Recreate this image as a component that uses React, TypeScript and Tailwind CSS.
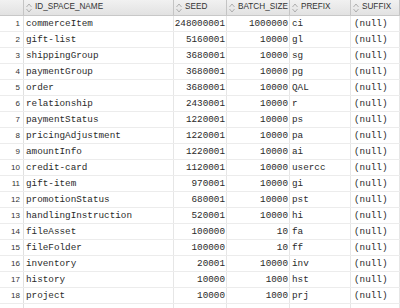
import React from "react";

const rows = [
  ["commerceItem", "248000001", "1000000", "ci"],
  ["gift-list", "5160001", "10000", "gl"],
  ["shippingGroup", "3680001", "10000", "sg"],
  ["paymentGroup", "3680001", "10000", "pg"],
  ["order", "3680001", "10000", "QAL"],
  ["relationship", "2430001", "10000", "r"],
  ["paymentStatus", "1220001", "10000", "ps"],
  ["pricingAdjustment", "1220001", "10000", "pa"],
  ["amountInfo", "1220001", "10000", "ai"],
  ["credit-card", "1120001", "10000", "usercc"],
  ["gift-item", "970001", "10000", "gi"],
  ["promotionStatus", "680001", "10000", "pst"],
  ["handlingInstruction", "520001", "10000", "hi"],
  ["fileAsset", "100000", "10", "fa"],
  ["fileFolder", "100000", "10", "ff"],
  ["inventory", "20001", "10000", "inv"],
  ["history", "10000", "1000", "hst"],
  ["project", "10000", "1000", "prj"],
];

const headers = ["ID_SPACE_NAME", "SEED", "BATCH_SIZE", "PREFIX", "SUFFIX"];

function SortIcon() {
  return (
    <svg width="6" height="10" viewBox="0 0 6 10" className="shrink-0">
      <path d="M0.5 4 L3 1 L5.5 4" fill="none" stroke="#a8a8a8" strokeWidth="0.9" />
      <path d="M0.5 6 L3 9 L5.5 6" fill="none" stroke="#a8a8a8" strokeWidth="0.9" />
    </svg>
  );
}

export default function App() {
  return (
    <div className="w-[400px] h-[308px] overflow-hidden bg-white text-[#2a2a2a]">
      {/* header */}
      <div className="grid grid-cols-[24px_150px_53px_63px_61px_49px] h-[16px] bg-gradient-to-b from-[#f1f1f1] to-[#e2e2e2] border-b border-[#c8c8c8] font-['Liberation_Sans',Arial,sans-serif]">
        <div className="border-r border-[#c4c4c4]" />
        {headers.map((h) => (
          <div
            key={h}
            className="flex items-center gap-[3px] pl-[2px] border-r border-[#c4c4c4] text-[8.2px] text-[#333] overflow-hidden whitespace-nowrap"
          >
            <SortIcon />
            {h}
          </div>
        ))}
      </div>

      {/* rows */}
      {[...rows, ["", "", "", ""]].map((r, i) => (
        <div
          key={i}
          className="grid grid-cols-[24px_150px_53px_63px_61px_49px] h-[16px] border-b border-[#ececec] text-[9.3px] font-['Liberation_Mono','Courier_New',monospace]"
        >
          <div className="flex items-center justify-end pr-[3px] border-r border-[#e0e0e0] text-[8px] text-[#333] font-['Liberation_Sans',Arial,sans-serif]">
            {i + 1}
          </div>
          <div className="flex items-center pl-[2px] border-r border-[#e6e6e6] whitespace-nowrap">
            {r[0]}
          </div>
          <div className="flex items-center justify-end pr-[1px] border-r border-[#e6e6e6]">{r[1]}</div>
          <div className="flex items-center justify-end pr-[1px] border-r border-[#e6e6e6]">{r[2]}</div>
          <div className="flex items-center pl-[2px] border-r border-[#e6e6e6]">{r[3]}</div>
          <div className="flex items-center pl-[3px] border-r border-[#e6e6e6]">
            {r[0] ? "(null)" : ""}
          </div>
        </div>
      ))}
    </div>
  );
}
